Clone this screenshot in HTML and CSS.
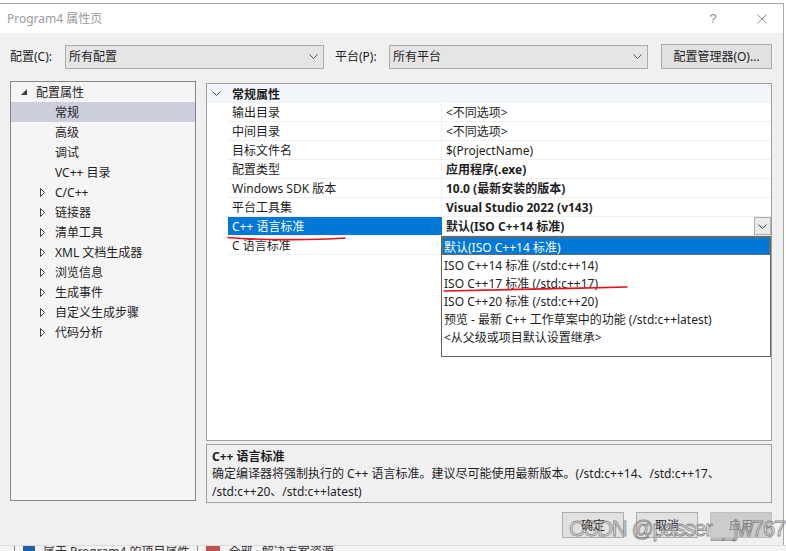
FILE: index.html
```html
<!DOCTYPE html>
<html lang="zh-CN">
<head>
<meta charset="utf-8">
<title>Program4 属性页</title>
<link rel="stylesheet" href="styles.css">
</head>
<body>
<div class="backdrop-top"></div>
<div class="dialog">
  <div class="titlebar">
    <span class="title">Program4 属性页</span>
    <span class="tb-help">?</span>
    <svg class="tb-close" width="10" height="10" viewBox="0 0 10 10"><path d="M0.5 0.5L9.5 9.5M9.5 0.5L0.5 9.5" stroke="#8c8c8c" stroke-width="1" fill="none"/></svg>
  </div>
  <div class="content">
    <div class="toprow">
      <span class="lbl lbl1">配置(C):</span>
      <div class="select"><span class="sel-text">所有配置</span><svg class="chev" width="9" height="5" viewBox="0 0 9 5"><path d="M0.5 0.5L4.5 4.5L8.5 0.5" stroke="#555" fill="none"/></svg></div>
      <span class="lbl lbl2">平台(P):</span>
      <div class="select"><span class="sel-text">所有平台</span><svg class="chev" width="9" height="5" viewBox="0 0 9 5"><path d="M0.5 0.5L4.5 4.5L8.5 0.5" stroke="#555" fill="none"/></svg></div>
      <button class="btn mgr">配置管理器(O)...</button>
    </div>
    <div class="main">
      <div class="tree">
        <div class="titem lvl0"><span class="tw"><svg width="6" height="6" viewBox="0 0 6 6"><path d="M6 0L6 6L0 6Z" fill="#3c3c3c"/></svg></span>配置属性</div>
        <div class="titem lvl1 selected"><span class="tw"></span>常规</div>
        <div class="titem lvl1"><span class="tw"></span>高级</div>
        <div class="titem lvl1"><span class="tw"></span>调试</div>
        <div class="titem lvl1"><span class="tw"></span>VC++ 目录</div>
        <div class="titem lvl1"><span class="tw"><svg width="5" height="9" viewBox="0 0 5 9"><path d="M0.5 0.5L4.5 4.5L0.5 8.5Z" stroke="#3c3c3c" fill="none"/></svg></span>C/C++</div>
        <div class="titem lvl1"><span class="tw"><svg width="5" height="9" viewBox="0 0 5 9"><path d="M0.5 0.5L4.5 4.5L0.5 8.5Z" stroke="#3c3c3c" fill="none"/></svg></span>链接器</div>
        <div class="titem lvl1"><span class="tw"><svg width="5" height="9" viewBox="0 0 5 9"><path d="M0.5 0.5L4.5 4.5L0.5 8.5Z" stroke="#3c3c3c" fill="none"/></svg></span>清单工具</div>
        <div class="titem lvl1"><span class="tw"><svg width="5" height="9" viewBox="0 0 5 9"><path d="M0.5 0.5L4.5 4.5L0.5 8.5Z" stroke="#3c3c3c" fill="none"/></svg></span>XML 文档生成器</div>
        <div class="titem lvl1"><span class="tw"><svg width="5" height="9" viewBox="0 0 5 9"><path d="M0.5 0.5L4.5 4.5L0.5 8.5Z" stroke="#3c3c3c" fill="none"/></svg></span>浏览信息</div>
        <div class="titem lvl1"><span class="tw"><svg width="5" height="9" viewBox="0 0 5 9"><path d="M0.5 0.5L4.5 4.5L0.5 8.5Z" stroke="#3c3c3c" fill="none"/></svg></span>生成事件</div>
        <div class="titem lvl1"><span class="tw"><svg width="5" height="9" viewBox="0 0 5 9"><path d="M0.5 0.5L4.5 4.5L0.5 8.5Z" stroke="#3c3c3c" fill="none"/></svg></span>自定义生成步骤</div>
        <div class="titem lvl1"><span class="tw"><svg width="5" height="9" viewBox="0 0 5 9"><path d="M0.5 0.5L4.5 4.5L0.5 8.5Z" stroke="#3c3c3c" fill="none"/></svg></span>代码分析</div>
      </div>
      <div class="rightcol">
        <div class="grid">
          <div class="ghead"><span class="gutter"><svg width="9" height="5" viewBox="0 0 9 5"><path d="M0.5 0.5L4.5 4.5L8.5 0.5" stroke="#444" fill="none"/></svg></span><span class="ghead-text">常规属性</span></div>
          <div class="grow"><span class="gutter"></span><span class="gname">输出目录</span><span class="gval">&lt;不同选项&gt;</span></div>
          <div class="grow"><span class="gutter"></span><span class="gname">中间目录</span><span class="gval">&lt;不同选项&gt;</span></div>
          <div class="grow"><span class="gutter"></span><span class="gname">目标文件名</span><span class="gval">$(ProjectName)</span></div>
          <div class="grow"><span class="gutter"></span><span class="gname">配置类型</span><span class="gval bold">应用程序(.exe)</span></div>
          <div class="grow"><span class="gutter"></span><span class="gname">Windows SDK 版本</span><span class="gval bold">10.0 (最新安装的版本)</span></div>
          <div class="grow"><span class="gutter"></span><span class="gname">平台工具集</span><span class="gval bold">Visual Studio 2022 (v143)</span></div>
          <div class="grow"><span class="gutter"></span><span class="gname sel">C++ 语言标准</span><span class="gval bold"><span class="gval-text">默认(ISO C++14 标准)</span><span class="ddbtn"><svg width="9" height="5" viewBox="0 0 9 5"><path d="M0.5 0.5L4.5 4.5L8.5 0.5" stroke="#444" fill="none"/></svg></span></span></div>
          <div class="grow"><span class="gutter"></span><span class="gname">C 语言标准</span><span class="gval"></span></div>
          <div class="dropdown">
            <div class="ditem dsel">默认(ISO C++14 标准)</div>
            <div class="ditem">ISO C++14 标准 (/std:c++14)</div>
            <div class="ditem">ISO C++17 标准 (/std:c++17)</div>
            <div class="ditem">ISO C++20 标准 (/std:c++20)</div>
            <div class="ditem">预览 - 最新 C++ 工作草案中的功能 (/std:c++latest)</div>
            <div class="ditem">&lt;从父级或项目默认设置继承&gt;</div>
          </div>
        </div>
        <div class="desc">
          <div class="desc-title">C++ 语言标准</div>
          <div class="desc-text">确定编译器将强制执行的 C++ 语言标准。建议尽可能使用最新版本。(/std:c++14、/std:c++17、<br>/std:c++20、/std:c++latest)</div>
        </div>
      </div>
    </div>
    <div class="buttons">
      <button class="btn act">确定</button>
      <button class="btn act">取消</button>
      <button class="btn disabled">应用</button>
    </div>
  </div>
</div>
<div class="backdrop-bottom">
  <span class="bb-mark"></span>
  <span class="bb-icon"></span>
  <span class="bb-text">属于 Program4 的项目属性</span>
  <span class="bb-sep"></span>
  <span class="bb-icon2"></span>
  <span class="bb-text">全部 · 解决方案资源</span>
</div>
<svg class="annot" width="786" height="551" viewBox="0 0 786 551">
  <path d="M228 237.5C258 240 310 240.5 345 238" stroke="#e3141b" stroke-width="1.6" fill="none" stroke-linecap="round"/>
  <path d="M444 291C480 290.5 560 288.5 627 287" stroke="#e3141b" stroke-width="1.6" fill="none" stroke-linecap="round"/>
</svg>
<div class="watermark">CSDN @passer__jw767</div>
</body>
</html>
```
FILE: styles.css
```css
* {
  box-sizing: border-box;
  margin: 0;
  padding: 0;
}

html, body {
  width: 786px;
  height: 551px;
  overflow: hidden;
}

body {
  position: relative;
  background: #ffffff;
  font-family: "Noto Sans", "Noto Sans CJK SC", sans-serif;
  font-size: 12px;
  color: #1e1e1e;
  line-height: 18px;
}

.backdrop-top {
  height: 3px;
  background: #ffffff;
}

.dialog {
  width: 784px;
  border-top: 1px solid #a8a8a8;
  border-right: 1px solid #a8a8a8;
  background: #f0f0f0;
}

.titlebar {
  height: 29px;
  background: #ffffff;
  display: flex;
  align-items: center;
  padding-left: 7px;
  color: #9b9b9b;
}

.title {
  flex: 1;
}

.tb-help {
  width: 12px;
  text-align: center;
  font-family: "Liberation Sans", sans-serif;
  font-size: 13px;
  color: #8c8c8c;
  margin-right: 38px;
}

.tb-close {
  margin-right: 16px;
}

.content {
  padding: 11px 11px 7px 10px;
}

.toprow {
  display: flex;
  align-items: center;
  height: 25px;
}

.lbl {
  padding-top: 1px;
}

.lbl1 {
  width: 55px;
}

.lbl2 {
  width: 54px;
  margin-left: 11px;
}

.select {
  width: 259px;
  height: 24px;
  border: 1px solid #adadad;
  background: #e5e5e5;
  display: flex;
  align-items: center;
  padding-left: 3px;
  padding-right: 5px;
}

.sel-text {
  flex: 1;
  padding-top: 1px;
}

.chev {
  display: block;
}

.btn {
  font-family: "Noto Sans", "Noto Sans CJK SC", sans-serif;
  font-size: 12px;
  color: #1e1e1e;
  border: 1px solid #adadad;
  background: #e1e1e1;
  height: 26px;
  line-height: 18px;
  padding-top: 1px;
}

.mgr {
  width: 111px;
  height: 25px;
  margin-left: 13px;
}

.main {
  display: flex;
  gap: 10px;
  height: 422px;
  margin-top: 12px;
}

.tree {
  width: 186px;
  height: 420px;
  border: 1px solid #828790;
  background: #f5f5f5;
}

.titem {
  height: 20px;
  display: flex;
  align-items: center;
  white-space: nowrap;
  padding-top: 2px;
}

.tw {
  width: 15px;
  height: 18px;
  display: flex;
  align-items: center;
  margin-top: -2px;
}

.lvl0 {
  padding-left: 10px;
}

.lvl1 {
  padding-left: 29px;
}

.selected {
  background: #cccedb;
}

.rightcol {
  width: 566px;
  padding-top: 2px;
  display: flex;
  flex-direction: column;
  gap: 3px;
}

.grid {
  position: relative;
  height: 358px;
  border: 1px solid #a0a0a0;
  background: #ffffff;
}

.ghead {
  height: 19px;
  display: flex;
  align-items: center;
  background: #f2f5fa;
  font-weight: 700;
}

.gutter {
  width: 21px;
  height: 18px;
  flex: none;
  display: flex;
  align-items: center;
  padding-left: 5px;
}

.ghead-text {
  padding-left: 4px;
  padding-top: 2px;
}

.grow {
  height: 19px;
  display: flex;
}

.gname {
  width: 214px;
  height: 19px;
  padding-left: 4px;
  line-height: 20px;
  border-right: 1px solid #f0f0f0;
  border-bottom: 1px solid #f0f0f0;
  white-space: nowrap;
}

.gname.sel {
  background: #0078d7;
  color: #ffffff;
  border-right-color: #0078d7;
}

.gval {
  flex: 1;
  height: 19px;
  padding-left: 4px;
  line-height: 20px;
  border-bottom: 1px solid #f0f0f0;
  white-space: nowrap;
  display: flex;
  align-items: flex-start;
}

.gval-text {
  flex: 1;
}

.bold {
  font-weight: 700;
}

.ddbtn {
  width: 17px;
  height: 18px;
  border: 1px solid #adadad;
  background: #eaeaea;
  display: flex;
  align-items: center;
  justify-content: center;
}

.dropdown {
  position: absolute;
  left: 234px;
  top: 152px;
  width: 330px;
  height: 121px;
  border: 1px solid #646464;
  background: #ffffff;
  font-weight: 400;
}

.ditem {
  height: 18px;
  padding-left: 2px;
  line-height: 21px;
  white-space: nowrap;
}

.dsel {
  background: #0078d7;
  color: #ffffff;
  outline: 1px dotted #c86400;
  outline-offset: -1px;
}

.desc {
  height: 59px;
  border: 1px solid #a0a0a0;
  background: #f0f0f0;
  padding: 3px 5px 0;
}

.desc-title {
  font-weight: 700;
  height: 17px;
}

.desc-text {
  line-height: 18px;
  white-space: nowrap;
}

.buttons {
  display: flex;
  justify-content: flex-end;
  gap: 12px;
  margin-top: 9px;
}

.buttons .btn {
  width: 62px;
}

.btn.disabled {
  background: #cccccc;
  border-color: #bfbfbf;
  color: #838383;
}

.backdrop-bottom {
  height: 6px;
  overflow: hidden;
  display: flex;
  align-items: flex-start;
  gap: 8px;
  padding-left: 4px;
  background: #f3f3f3;
  border-top: 1px solid #dcdcdc;
}

.bb-mark {
  width: 1px;
  height: 6px;
  margin-left: 10px;
  background: #888;
}

.bb-icon {
  width: 12px;
  height: 5px;
  background: #1f5fa8;
}

.bb-icon2 {
  width: 14px;
  height: 5px;
  background: #c05050;
}

.bb-sep {
  width: 1px;
  height: 6px;
  background: #888;
}

.bb-text {
  font-size: 12px;
  line-height: 12px;
  color: #333;
  white-space: nowrap;
}

.annot {
  position: absolute;
  left: 0;
  top: 0;
  pointer-events: none;
}

.watermark {
  position: absolute;
  left: 569px;
  top: 516px;
  font-family: "Liberation Sans", sans-serif;
  font-size: 22px;
  line-height: 26px;
  letter-spacing: -1.2px;
  color: rgba(235, 235, 235, 0.45);
  -webkit-text-stroke: 0.9px rgba(110, 110, 110, 0.75);
  white-space: nowrap;
  pointer-events: none;
}
```
